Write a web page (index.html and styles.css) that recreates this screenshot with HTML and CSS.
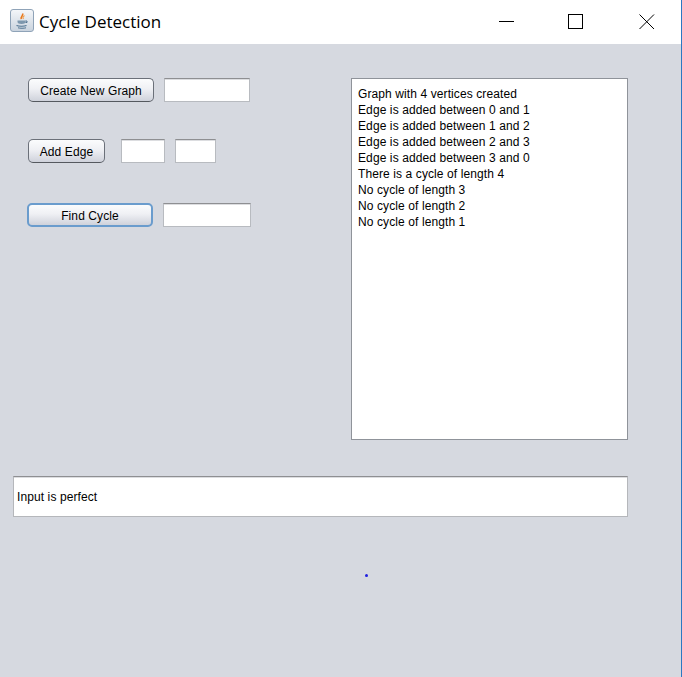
FILE: index.html
```html
<!DOCTYPE html>
<html lang="en">
<head>
  <meta charset="UTF-8">
  <title>Cycle Detection</title>
  <link rel="stylesheet" href="styles.css">
</head>
<body>
  <div class="window">
    <div class="titlebar">
      <div class="app-icon">
        <svg width="18" height="18" viewBox="0 0 18 18" fill="none">
          <path d="M9.5 1.5c1.5 2-2.5 3-1 5.5" stroke="#e8791e" stroke-width="1.6"/>
          <path d="M11.5 3.5c-1.500 1-2 2-1 3.500" stroke="#f0a050" stroke-width="1.200"/>
          <path d="M4.500 8.500h8v1.500c0 1-1.500 2-4 2s-4-1-4-2z" fill="#7d97ad"/>
          <path d="M12.500 9h1.500v1.500h-1.500" stroke="#4f7391"/>
          <path d="M3.500 13.500c2 1 8 1 10 0" stroke="#4f7391" stroke-width="1.200"/>
          <path d="M5 15.800c2 .6 6 .6 8 0" stroke="#4f7391" stroke-width="1"/>
        </svg>
      </div>
      <span class="title">Cycle Detection</span>
      <div class="win-controls">
        <svg class="min-icon" width="16" height="16" viewBox="0 0 16 16"><path d="M0 7.500h15" stroke="#000"/></svg>
        <svg width="16" height="16" viewBox="0 0 16 16" fill="none"><rect x=".5" y=".5" width="14" height="14" stroke="#000"/></svg>
        <svg width="16" height="16" viewBox="0 0 16 16"><path d="M.5 .5l14.500 14.500M15 .5l-14.500 14.500" stroke="#000"/></svg>
      </div>
    </div>

    <div class="content">
      <div class="top">
        <div class="controls">
          <div class="row">
            <button class="btn create">Create New Graph</button>
            <input class="field vertices" type="text">
          </div>
          <div class="row edge-row">
            <button class="btn add-edge">Add Edge</button>
            <input class="field from" type="text">
            <input class="field to" type="text">
          </div>
          <div class="row cycle-row">
            <button class="btn find focused">Find Cycle</button>
            <input class="field length" type="text">
          </div>
        </div>
        <div class="output">
          <div>Graph with 4 vertices created</div>
          <div>Edge is added between 0 and 1</div>
          <div>Edge is added between 1 and 2</div>
          <div>Edge is added between 2 and 3</div>
          <div>Edge is added between 3 and 0</div>
          <div>There is a cycle of length 4</div>
          <div>No cycle of length 3</div>
          <div>No cycle of length 2</div>
          <div>No cycle of length 1</div>
        </div>
      </div>
      <div class="status">Input is perfect</div>
      <div class="canvas-dot"></div>
    </div>
  </div>
</body>
</html>
```

FILE: styles.css
```css
* {
  margin: 0;
  padding: 0;
  box-sizing: border-box;
}

body {
  width: 682px;
  height: 677px;
  overflow: hidden;
  background: #d6d9e0;
  font-family: "Liberation Sans", Arial, sans-serif;
  font-size: 12px;
  letter-spacing: .1px;
  color: #000;
}

.window {
  height: 677px;
  border-right: 1px solid #2b78c2;
}

.titlebar {
  height: 44px;
  background: #fff;
  display: flex;
  align-items: center;
  padding-left: 10px;
}

.app-icon {
  width: 24px;
  height: 23px;
  margin-top: -3px;
  display: flex;
  align-items: center;
  justify-content: center;
  background: linear-gradient(to bottom, #f4f6f9, #c9d3de);
  border: 1px solid #8fa3b8;
  border-radius: 3px;
}

.title {
  margin-left: 5px;
  font-family: "Open Sans", sans-serif;
  font-size: 17px;
  letter-spacing: 0;
  margin-top: -1px;
}

.win-controls {
  margin-left: auto;
  margin-right: 26px;
  display: flex;
  gap: 55px;
}

.min-icon {
  margin-right: -2px;
}

.content {
  position: relative;
  padding: 34px 0 0 13px;
}

.top {
  display: flex;
}

.controls {
  width: 338px;
  padding-left: 15px;
}

.row {
  display: flex;
  height: 24px;
}

.edge-row {
  margin-top: 37px;
}

.cycle-row {
  margin-top: 40px;
}

.btn {
  height: 24px;
  padding-top: 2px;
  font-family: inherit;
  font-size: 12px;
  letter-spacing: .1px;
  color: #000;
  background: linear-gradient(to bottom, #fbfcfd, #eff0f4 45%, #cfd2db);
  border: 1px solid #6b7079;
  border-bottom-color: #55595f;
  border-radius: 5px;
}

.btn.focused {
  border: 2px solid #6a9ccd;
  margin-left: -1px;
  margin-right: 1px;
}

.create,
.find {
  width: 126px;
}

.add-edge {
  width: 77px;
}

.field {
  height: 24px;
  background: #fff;
  border: 1px solid #b8bbc0;
  border-top-color: #8e8f92;
  box-shadow: inset 0 1px 0 #dcdde0;
  outline: none;
}

.vertices {
  width: 86px;
  margin-left: 10px;
}

.from {
  width: 44px;
  margin-left: 16px;
}

.to {
  width: 41px;
  margin-left: 10px;
}

.length {
  width: 88px;
  margin-left: 9px;
}

.output {
  width: 277px;
  height: 362px;
  background: #fff;
  border: 1px solid #8f939a;
  padding: 7px 6px;
  line-height: 16px;
}

.status {
  width: 615px;
  height: 41px;
  margin-top: 36px;
  background: #fff;
  border: 1px solid #b5b7bb;
  border-top-color: #8e8f92;
  box-shadow: inset 0 1px 0 #dcdde0;
  padding-left: 3px;
  display: flex;
  align-items: center;
}

.canvas-dot {
  position: absolute;
  left: 365px;
  top: 530px;
  width: 3px;
  height: 3px;
  background: #1f1fe0;
  border-radius: 50%;
}
```
